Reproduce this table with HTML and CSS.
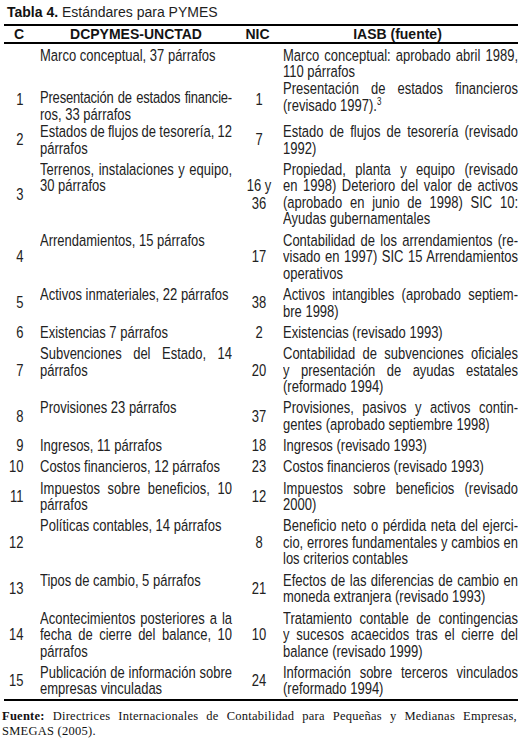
FILE: index.html
```html
<!DOCTYPE html>
<html lang="es">
<head>
<meta charset="utf-8">
<title>Tabla 4. Estándares para PYMES</title>
<link rel="stylesheet" href="styles.css">
</head>
<body>
<div class="page">
  <p class="caption"><b>Tabla 4.</b> Estándares para PYMES</p>
  <div class="table">
    <div class="row head">
      <div class="c">C</div>
      <div class="dc">DCPYMES-UNCTAD</div>
      <div class="nic">NIC</div>
      <div class="ias">IASB (fuente)</div>
    </div>
    <div class="tbody">
      <div class="row first">
        <div class="c"></div>
        <div class="dc"><span class="ln">Marco conceptual, 37 párrafos</span></div>
        <div class="nic"></div>
        <div class="ias"><span class="ln j">Marco conceptual: aprobado abril 1989,</span><span class="ln">110 párrafos</span></div>
      </div>
      <div class="row second">
        <div class="c"><span class="ln">1</span></div>
        <div class="dc drop"><span class="ln j cond">Presentación de estados financie-</span><span class="ln">ros, 33 párrafos</span></div>
        <div class="nic"><span class="ln">1</span></div>
        <div class="ias"><span class="ln j">Presentación de estados financieros</span><span class="ln">(revisado 1997).<sup>3</sup></span></div>
      </div>
      <div class="row">
        <div class="c"><span class="ln">2</span></div>
        <div class="dc"><span class="ln j">Estados de flujos de tesorería, 12</span><span class="ln">párrafos</span></div>
        <div class="nic"><span class="ln">7</span></div>
        <div class="ias"><span class="ln j">Estado de flujos de tesorería (revisado</span><span class="ln">1992)</span></div>
      </div>
      <div class="row">
        <div class="c"><span class="ln">3</span></div>
        <div class="dc"><span class="ln j">Terrenos, instalaciones y equipo,</span><span class="ln">30 párrafos</span></div>
        <div class="nic nic2"><span class="ln">16 y</span><span class="ln">36</span></div>
        <div class="ias"><span class="ln j">Propiedad, planta y equipo (revisado</span><span class="ln j">en 1998) Deterioro del valor de activos</span><span class="ln j">(aprobado en junio de 1998) SIC 10:</span><span class="ln">Ayudas gubernamentales</span></div>
      </div>
      <div class="row">
        <div class="c"><span class="ln">4</span></div>
        <div class="dc"><span class="ln">Arrendamientos, 15 párrafos</span></div>
        <div class="nic"><span class="ln">17</span></div>
        <div class="ias"><span class="ln j">Contabilidad de los arrendamientos (re-</span><span class="ln j">visado en 1997) SIC 15 Arrendamientos</span><span class="ln">operativos</span></div>
      </div>
      <div class="row">
        <div class="c"><span class="ln">5</span></div>
        <div class="dc"><span class="ln">Activos inmateriales, 22 párrafos</span></div>
        <div class="nic"><span class="ln">38</span></div>
        <div class="ias"><span class="ln j">Activos intangibles (aprobado septiem-</span><span class="ln">bre 1998)</span></div>
      </div>
      <div class="row">
        <div class="c"><span class="ln">6</span></div>
        <div class="dc"><span class="ln">Existencias 7 párrafos</span></div>
        <div class="nic"><span class="ln">2</span></div>
        <div class="ias"><span class="ln">Existencias (revisado 1993)</span></div>
      </div>
      <div class="row">
        <div class="c"><span class="ln">7</span></div>
        <div class="dc"><span class="ln j">Subvenciones del Estado, 14</span><span class="ln">párrafos</span></div>
        <div class="nic"><span class="ln">20</span></div>
        <div class="ias"><span class="ln j">Contabilidad de subvenciones oficiales</span><span class="ln j">y presentación de ayudas estatales</span><span class="ln">(reformado 1994)</span></div>
      </div>
      <div class="row">
        <div class="c"><span class="ln">8</span></div>
        <div class="dc"><span class="ln">Provisiones 23 párrafos</span></div>
        <div class="nic"><span class="ln">37</span></div>
        <div class="ias"><span class="ln j">Provisiones, pasivos y activos contin-</span><span class="ln">gentes (aprobado septiembre 1998)</span></div>
      </div>
      <div class="row">
        <div class="c"><span class="ln">9</span></div>
        <div class="dc"><span class="ln">Ingresos, 11 párrafos</span></div>
        <div class="nic"><span class="ln">18</span></div>
        <div class="ias"><span class="ln">Ingresos (revisado 1993)</span></div>
      </div>
      <div class="row">
        <div class="c"><span class="ln">10</span></div>
        <div class="dc"><span class="ln">Costos financieros, 12 párrafos</span></div>
        <div class="nic"><span class="ln">23</span></div>
        <div class="ias"><span class="ln">Costos financieros (revisado 1993)</span></div>
      </div>
      <div class="row">
        <div class="c"><span class="ln">11</span></div>
        <div class="dc"><span class="ln j">Impuestos sobre beneficios, 10</span><span class="ln">párrafos</span></div>
        <div class="nic"><span class="ln">12</span></div>
        <div class="ias"><span class="ln j">Impuestos sobre beneficios (revisado</span><span class="ln">2000)</span></div>
      </div>
      <div class="row">
        <div class="c"><span class="ln">12</span></div>
        <div class="dc"><span class="ln">Políticas contables, 14 párrafos</span></div>
        <div class="nic"><span class="ln">8</span></div>
        <div class="ias"><span class="ln j">Beneficio neto o pérdida neta del ejerci-</span><span class="ln j">cio, errores fundamentales y cambios en</span><span class="ln">los criterios contables</span></div>
      </div>
      <div class="row">
        <div class="c"><span class="ln">13</span></div>
        <div class="dc"><span class="ln">Tipos de cambio, 5 párrafos</span></div>
        <div class="nic"><span class="ln">21</span></div>
        <div class="ias"><span class="ln j">Efectos de las diferencias de cambio en</span><span class="ln">moneda extranjera (revisado 1993)</span></div>
      </div>
      <div class="row">
        <div class="c"><span class="ln">14</span></div>
        <div class="dc"><span class="ln j">Acontecimientos posteriores a la</span><span class="ln j">fecha de cierre del balance, 10</span><span class="ln">párrafos</span></div>
        <div class="nic"><span class="ln">10</span></div>
        <div class="ias"><span class="ln j">Tratamiento contable de contingencias</span><span class="ln j">y sucesos acaecidos tras el cierre del</span><span class="ln">balance (revisado 1999)</span></div>
      </div>
      <div class="row">
        <div class="c"><span class="ln">15</span></div>
        <div class="dc"><span class="ln j">Publicación de información sobre</span><span class="ln">empresas vinculadas</span></div>
        <div class="nic"><span class="ln">24</span></div>
        <div class="ias"><span class="ln j">Información sobre terceros vinculados</span><span class="ln">(reformado 1994)</span></div>
      </div>
    </div>
  </div>
  <p class="source"><span class="fl j"><b>Fuente:</b> Directrices Internacionales de Contabilidad para Pequeñas y Medianas Empresas,</span><span class="fl">SMEGAS (2005).</span></p>
</div>
</body>
</html>
```

FILE: styles.css
```css
* { box-sizing: border-box; }

html, body {
  margin: 0;
  padding: 0;
  background: #ffffff;
}

body {
  color: #141414;
  font-family: "Liberation Sans", Arial, sans-serif;
}

.page {
  width: 514px;
  margin-left: 4px;
  padding-top: 4px;
}

.caption {
  margin: 0 0 4px 0;
  padding-left: 3px;
  font-size: 14px;
  line-height: 16px;
  color: #1e1e1e;
}

.caption b { font-weight: 700; color: #111; }

.table {
  border-top: 2px solid #000;
  border-bottom: 2px solid #000;
}

.row {
  display: grid;
  grid-template-columns: 20px 208px 51px 235px;
}

.head {
  font-weight: 700;
  font-size: 14px;
  line-height: 15px;
  padding-top: 1px;
  border-bottom: 2px solid #000;
}

.head .c { text-align: right; }
.head .dc { padding-left: 16px; text-align: center; }
.head .nic { text-align: center; }
.head .ias { text-align: center; padding-right: 6px; }

.tbody .row {
  font-family: "Liberation Sans", Arial, sans-serif;
  font-size: 13px;
  line-height: 16.5px;
  padding: 3.6px 0 1.2px;
  align-items: start;
  color: #222;
}

.tbody .row.first { padding-bottom: 0; }
.tbody .row.second { padding-top: 0.8px; }

.tbody .c {
  align-self: center;
}

.tbody .c .ln {
  text-align: right;
  padding-right: 0.5px;
}

.tbody .nic {
  align-self: center;
}

.tbody .nic .ln {
  text-align: center;
  padding-left: 3px;
}

.tbody .nic2 .ln { line-height: 18px; }

.tbody .dc { padding-left: 16px; }

.drop {
  margin-top: 9px;
  margin-bottom: -4px;
}

.ln {
  display: block;
  white-space: nowrap;
  text-align: left;
  transform: scaleY(1.3);
}

.j {
  white-space: normal;
  word-spacing: -2px;
  text-align: justify;
  text-align-last: justify;
}

.cond { letter-spacing: -0.2px; }

sup {
  font-size: 8px;
  line-height: 0;
  vertical-align: 5px;
}

.source {
  margin: 7.5px 1px 0 -2px;
  font-family: "Liberation Serif", "Times New Roman", serif;
  font-size: 12.5px;
  letter-spacing: 0.25px;
  line-height: 15px;
  color: #111;
}

.fl {
  display: block;
  white-space: nowrap;
}

.fl.j {
  white-space: normal;
  word-spacing: -1px;
}

.source b { font-weight: 700; }
```
